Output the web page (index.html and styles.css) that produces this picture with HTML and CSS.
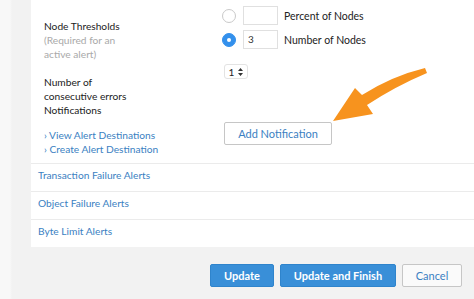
FILE: index.html
```html
<!DOCTYPE html>
<html>
<head>
<meta charset="utf-8">
<link rel="stylesheet" href="styles.css">
</head>
<body>
<div class="page">
  <div class="panel">
    <div class="form">
      <div class="labels">
        <div class="label-block">
          <div>Node Thresholds</div>
          <div class="muted">(Required for an</div>
          <div class="muted">active alert)</div>
        </div>
        <div class="label-block errors">
          <div>Number of</div>
          <div>consecutive errors</div>
          <div>Notifications</div>
        </div>
        <div class="label-block links">
          <a class="link">› View Alert Destinations</a>
          <a class="link">› Create Alert Destination</a>
        </div>
      </div>
      <div class="values">
        <div class="radio-row">
          <span class="radio"></span>
          <span class="text-input"></span>
          <span class="radio-label">Percent of Nodes</span>
        </div>
        <div class="radio-row second">
          <span class="radio checked"></span>
          <span class="text-input">3</span>
          <span class="radio-label">Number of Nodes</span>
        </div>
        <div class="select">
          <span>1</span>
          <svg class="updown" width="5" height="8" viewBox="0 0 5 8"><path d="M2.5 0 L5 3 L0 3 Z M2.5 8 L5 5 L0 5 Z" fill="#333"/></svg>
        </div>
        <button class="btn-outline add">Add Notification</button>
      </div>
    </div>
    <div class="row">Transaction Failure Alerts</div>
    <div class="row">Object Failure Alerts</div>
    <div class="row">Byte Limit Alerts</div>
  </div>
  <div class="footer">
    <button class="btn-primary update">Update</button>
    <button class="btn-primary finish">Update and Finish</button>
    <button class="btn-outline cancel">Cancel</button>
  </div>
</div>
<svg class="arrow" width="100" height="65" viewBox="0 0 100 65">
  <path d="M3 61 L25 28 L32 35 Q62 16 95 8 L97 13 Q66 26 37 45 L43 54 Z" fill="#f7931e"/>
</svg>
</body>
</html>
```

FILE: styles.css
```css
html, body {
  margin: 0;
  padding: 0;
}
body {
  width: 474px;
  height: 299px;
  overflow: hidden;
  background: linear-gradient(to right, #f8f8f8 0, #f8f8f8 10px, #f2f2f2 12px, #f2f2f2 100%);
  font-family: Lato, "Liberation Sans", sans-serif;
  font-size: 10.2px;
  color: #222;
  position: relative;
}
.page {
  padding-left: 31px;
}
.panel {
  background: #fff;
}
.form {
  display: flex;
  height: 163px;
  box-sizing: border-box;
}
.labels {
  width: 191px;
  padding-left: 13px;
  padding-top: 19px;
  box-sizing: border-box;
  line-height: 14px;
}
.label-block {
  display: flex;
  flex-direction: column;
}
.muted {
  color: #a9a9a9;
}
.errors {
  margin-top: 14px;
}
.links {
  margin-top: 11px;
}
.link {
  color: #3b7fc2;
  text-decoration: none;
}
.values {
  padding-top: 6px;
  display: flex;
  flex-direction: column;
  align-items: flex-start;
}
.radio-row {
  display: flex;
  align-items: center;
  height: 19px;
}
.radio-row.second {
  margin-top: 5px;
}
.radio {
  width: 12px;
  height: 12px;
  border: 1px solid #c9c9c9;
  border-radius: 50%;
  background: #fff;
  box-sizing: content-box;
  position: relative;
}
.radio.checked {
  background: #3390ec;
  border-color: #3390ec;
}
.radio.checked::after {
  content: "";
  position: absolute;
  left: 4px;
  top: 4px;
  width: 4px;
  height: 4px;
  border-radius: 50%;
  background: #fff;
}
.text-input {
  margin-left: 7px;
  width: 35px;
  height: 19px;
  box-sizing: border-box;
  border: 1px solid #e0e0e0;
  padding-left: 4px;
  line-height: 17px;
  font-size: 10px;
  color: #333;
}
.radio-label {
  margin-left: 6px;
  font-size: 10.5px;
}
.select {
  margin-top: 15px;
  margin-left: 2px;
  width: 24px;
  height: 15px;
  box-sizing: border-box;
  border: 1px solid #e3e3e3;
  border-radius: 3px;
  display: flex;
  align-items: center;
  justify-content: center;
  gap: 4px;
  font-size: 10px;
}
.btn-outline {
  font-family: inherit;
  font-size: 11px;
  background: #fff;
  color: #3b7fc2;
  border: 1px solid #c6c6c6;
  border-radius: 2px;
  padding: 0;
  height: 23px;
}
.add {
  margin-top: 43px;
  margin-left: 2px;
  width: 108px;
}
.row {
  height: 27px;
  border-top: 1px solid #ebebeb;
  padding-left: 7px;
  line-height: 23px;
  color: #3b7fc2;
}
.footer {
  display: flex;
  justify-content: flex-end;
  gap: 6px;
  padding-top: 17px;
  padding-right: 12px;
}
.btn-primary {
  font-family: inherit;
  font-size: 11px;
  font-weight: 700;
  background: #398fd8;
  color: #fff;
  border: 1px solid #2f84cc;
  border-radius: 2px;
  height: 23px;
  padding: 0;
}
.update {
  width: 64px;
}
.finish {
  width: 116px;
}
.cancel {
  width: 60px;
  background: #fafafa;
}
.arrow {
  position: absolute;
  left: 330px;
  top: 60px;
}
```
